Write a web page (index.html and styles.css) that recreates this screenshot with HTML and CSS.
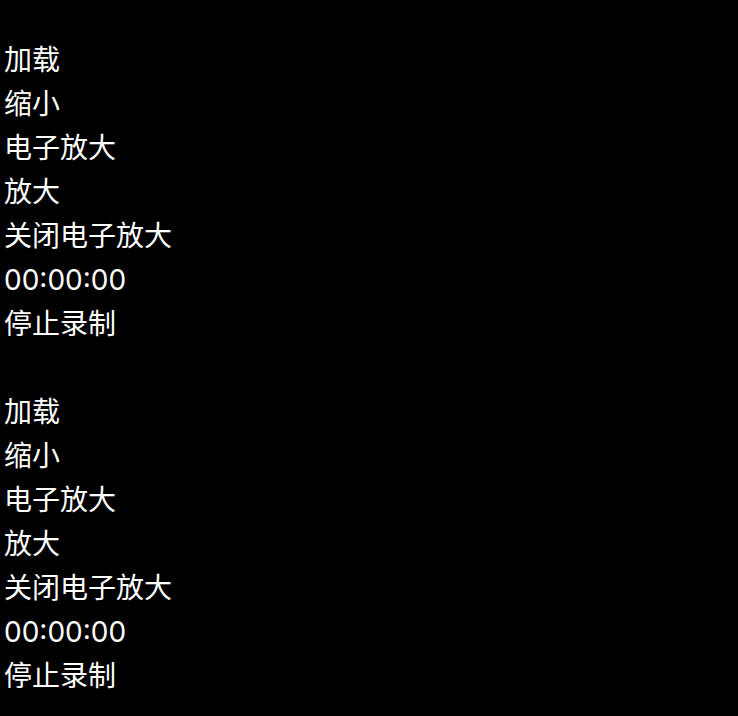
FILE: index.html
```html
<!DOCTYPE html>
<html lang="zh-CN">
<head>
<meta charset="utf-8">
<link rel="stylesheet" href="styles.css">
</head>
<body>
<div class="page">
  <div class="group">
    <div class="item">加载</div>
    <div class="item">缩小</div>
    <div class="item">电子放大</div>
    <div class="item">放大</div>
    <div class="item">关闭电子放大</div>
    <div class="item">00:00:00</div>
    <div class="item">停止录制</div>
  </div>
  <div class="group">
    <div class="item">加载</div>
    <div class="item">缩小</div>
    <div class="item">电子放大</div>
    <div class="item">放大</div>
    <div class="item">关闭电子放大</div>
    <div class="item">00:00:00</div>
    <div class="item">停止录制</div>
  </div>
</div>
</body>
</html>
```
FILE: styles.css
```css
html, body {
  margin: 0;
  padding: 0;
  background: #000;
  height: 100%;
}
.page {
  display: flex;
  flex-direction: column;
  gap: 44px;
  padding: 38px 0 0 4px;
  color: #fff;
  font-family: "Inter", "Noto Sans CJK SC", sans-serif;
  font-size: 28px;
  line-height: 44px;
}
.item {
  white-space: nowrap;
}
```
